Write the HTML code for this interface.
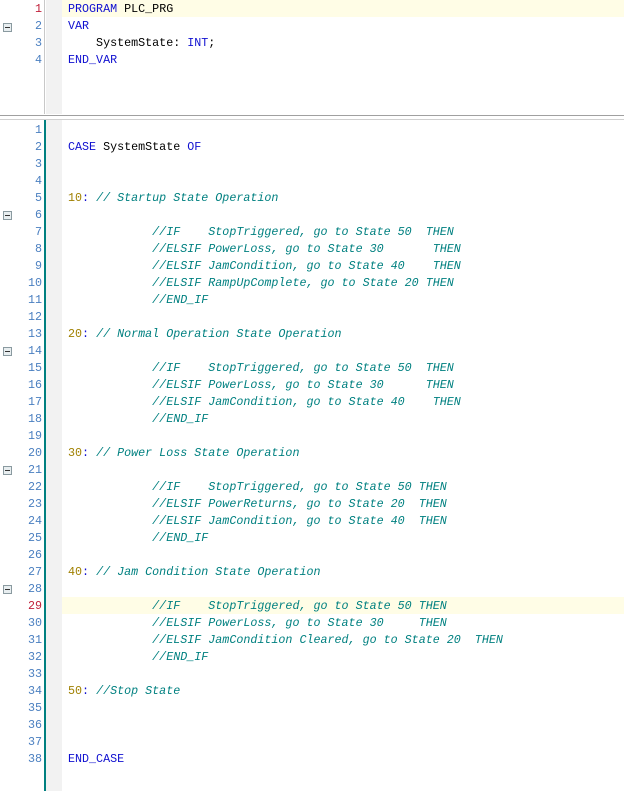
<!DOCTYPE html>
<html><head><meta charset="utf-8"><style>
html,body{margin:0;padding:0;width:624px;height:791px;overflow:hidden;background:#fff;position:relative;font-family:"Liberation Mono",monospace;font-size:11.7px}
.strip{position:absolute;left:46px;width:16px;background:#f2f2f2}
.ln{position:absolute;left:0;width:42px;text-align:right;color:#4a7fc0;height:17px;line-height:17px}
.ln.cur{color:#c0203a}
.cd{position:absolute;left:68px;white-space:pre;height:17px;line-height:17px;color:#000}
.k{color:#1010d0}.c{color:#008080;font-style:italic}.n{color:#a08000}
.hl{position:absolute;left:62px;right:0;height:17px;background:#fffde6}
.box{position:absolute;left:3px;width:7px;height:7px;border:1px solid #8a9aa0;background:#e8eef0}
.box:after{content:"";position:absolute;left:1px;top:3px;width:5px;height:1px;background:#333}
</style></head><body>
<div class="strip" style="top:0;height:114px"></div>
<div style="position:absolute;left:44px;top:0;width:1px;height:114px;background:#c8c8c8"></div>
<div class="hl" style="top:0"></div>
<div class="ln cur" style="top:1px">1</div><div class="cd" style="top:1px"><span class="k">PROGRAM</span> PLC_PRG</div>
<div class="ln" style="top:18px">2</div><div class="cd" style="top:18px"><span class="k">VAR</span></div>
<div class="box" style="top:23px"></div>
<div class="ln" style="top:35px">3</div><div class="cd" style="top:35px">    SystemState: <span class="k">INT</span>;</div>
<div class="ln" style="top:52px">4</div><div class="cd" style="top:52px"><span class="k">END_VAR</span></div>
<div style="position:absolute;left:0;right:0;top:115px;height:1px;background:#a0a0a0"></div>
<div style="position:absolute;left:0;right:0;top:119px;height:1px;background:#d0d0d0"></div>
<div class="strip" style="top:120px;height:671px"></div>
<div style="position:absolute;left:44px;top:120px;width:2px;height:671px;background:#008080"></div>
<div class="hl" style="top:597px"></div>
<div id="b"></div>
<script>
var L=[
"","<span class='k'>CASE</span> SystemState <span class='k'>OF</span>","","",
"<span class='n'>10</span><span class='k'>:</span> <span class='c'>// Startup State Operation</span>","",
"            <span class='c'>//IF    StopTriggered, go to State 50  THEN</span>",
"            <span class='c'>//ELSIF PowerLoss, go to State 30       THEN</span>",
"            <span class='c'>//ELSIF JamCondition, go to State 40    THEN</span>",
"            <span class='c'>//ELSIF RampUpComplete, go to State 20 THEN</span>",
"            <span class='c'>//END_IF</span>","",
"<span class='n'>20</span><span class='k'>:</span> <span class='c'>// Normal Operation State Operation</span>","",
"            <span class='c'>//IF    StopTriggered, go to State 50  THEN</span>",
"            <span class='c'>//ELSIF PowerLoss, go to State 30      THEN</span>",
"            <span class='c'>//ELSIF JamCondition, go to State 40    THEN</span>",
"            <span class='c'>//END_IF</span>","",
"<span class='n'>30</span><span class='k'>:</span> <span class='c'>// Power Loss State Operation</span>","",
"            <span class='c'>//IF    StopTriggered, go to State 50 THEN</span>",
"            <span class='c'>//ELSIF PowerReturns, go to State 20  THEN</span>",
"            <span class='c'>//ELSIF JamCondition, go to State 40  THEN</span>",
"            <span class='c'>//END_IF</span>","",
"<span class='n'>40</span><span class='k'>:</span> <span class='c'>// Jam Condition State Operation</span>","",
"            <span class='c'>//IF    StopTriggered, go to State 50 THEN</span>",
"            <span class='c'>//ELSIF PowerLoss, go to State 30     THEN</span>",
"            <span class='c'>//ELSIF JamCondition Cleared, go to State 20  THEN</span>",
"            <span class='c'>//END_IF</span>","",
"<span class='n'>50</span><span class='k'>:</span> <span class='c'>//Stop State</span>","","","",
"<span class='k'>END_CASE</span>"];
var h="",boxes=[6,14,21,28];
for(var i=0;i<L.length;i++){var t=122+17*i;
h+="<div class='ln"+(i==28?" cur":"")+"' style='top:"+t+"px'>"+(i+1)+"</div><div class='cd' style='top:"+t+"px'>"+L[i]+"</div>";
if(boxes.indexOf(i+1)>=0)h+="<div class='box' style='top:"+(t+4)+"px'></div>";}
document.getElementById("b").innerHTML=h;
</script>
</body></html>
